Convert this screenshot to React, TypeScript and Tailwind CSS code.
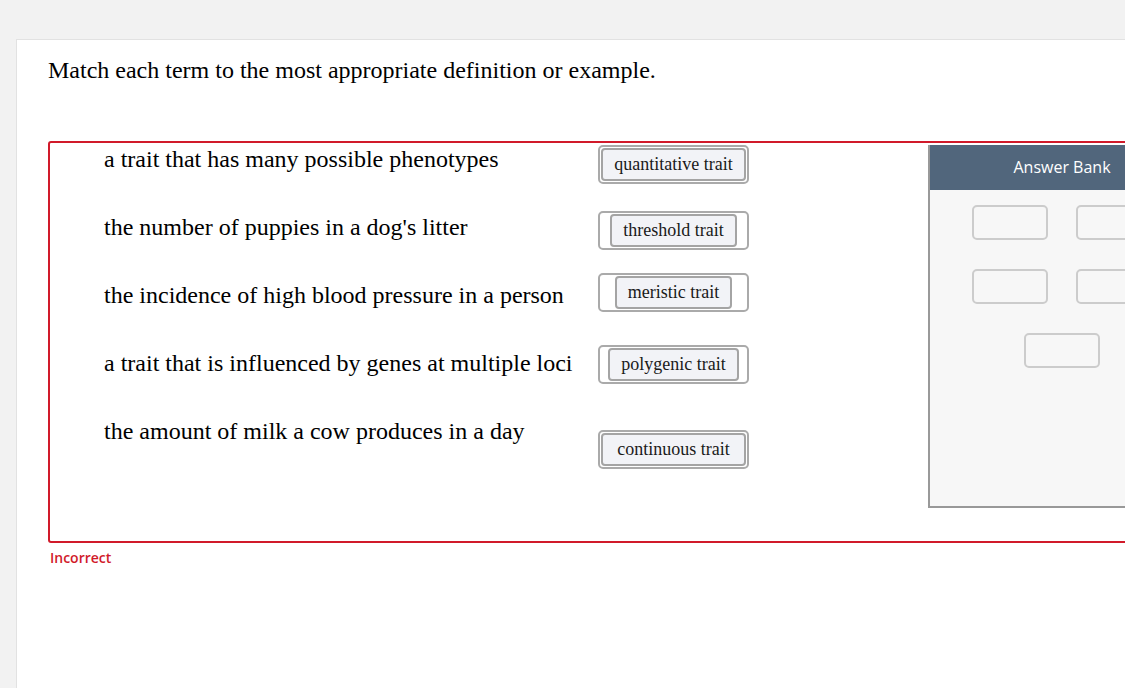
import React from "react";

const serif = { fontFamily: '"Liberation Serif", "Times New Roman", serif' };
const sans = { fontFamily: '"Open Sans", "Noto Sans", sans-serif' };

const terms = [
  "a trait that has many possible phenotypes",
  "the number of puppies in a dog's litter",
  "the incidence of high blood pressure in a person",
  "a trait that is influenced by genes at multiple loci",
  "the amount of milk a cow produces in a day",
];

const zones: { label: string; mt: string; full: boolean }[] = [
  { label: "quantitative trait", mt: "mt-0", full: true },
  { label: "threshold trait", mt: "mt-[27px]", full: false },
  { label: "meristic trait", mt: "mt-[23px]", full: false },
  { label: "polygenic trait", mt: "mt-[33px]", full: false },
  { label: "continuous trait", mt: "mt-[46px]", full: true },
];

function Chip({ label }: { label: string }) {
  return (
    <div
      className="h-[33px] px-[11px] pb-px flex items-center justify-center bg-[#f2f3f7] border-2 border-[#a4a4a4] rounded-[4px] text-[18px] leading-none text-[#1a1a1a] whitespace-nowrap"
      style={serif}
    >
      {label}
    </div>
  );
}

export default function App() {
  return (
    <div className="w-[1125px] h-[688px] overflow-hidden bg-[#f2f2f2] pt-[39px] pl-[16px]">
      <div className="w-[1300px] h-[700px] bg-white border-l border-t border-[#e2e2e2] pl-[31px] pt-[16px]">
        <div className="text-[24px] leading-[28px] text-black" style={serif}>
          Match each term to the most appropriate definition or example.
        </div>

        <div className="mt-[57px] w-[1250px] h-[402px] border-2 border-[#d11a2a] rounded-[3px] flex">
          <div className="flex pl-[54px] pt-[2px]">
            <div className="w-[494px] flex flex-col">
              {terms.map((t) => (
                <div
                  key={t}
                  className="h-[68px] text-[24px] leading-[28px] text-black whitespace-nowrap"
                  style={serif}
                >
                  {t}
                </div>
              ))}
            </div>
            <div className="w-[151px] flex flex-col">
              {zones.map((z) => (
                <div
                  key={z.label}
                  className={`${z.mt} h-[39px] border-2 border-[#aaaaaa] rounded-[5px] bg-white p-px flex items-center justify-center`}
                >
                  {z.full ? (
                    <div className="w-full">
                      <Chip label={z.label} />
                    </div>
                  ) : (
                    <Chip label={z.label} />
                  )}
                </div>
              ))}
            </div>
          </div>

          <div className="ml-[179px] mt-[2px] w-[268px] h-[363px] border-l-2 border-r-2 border-b-2 border-[#999999] bg-[#f7f7f7] flex flex-col">
            <div
              className="h-[45px] pb-[2px] bg-[#51667c] text-white text-[16px] flex items-center justify-center"
              style={sans}
            >
              Answer Bank
            </div>
            <div className="pt-[15px] flex flex-wrap justify-center gap-x-[28px] gap-y-[29px] px-[40px]">
              {[0, 1, 2, 3, 4].map((i) => (
                <div
                  key={i}
                  className="w-[76px] h-[35px] border-2 border-[#cccccc] rounded-[5px] bg-[#f7f7f7]"
                />
              ))}
            </div>
          </div>
        </div>

        <div
          className="ml-[2px] mt-[5px] text-[14px] leading-[20px] font-semibold text-[#d11a2a]"
          style={sans}
        >
          Incorrect
        </div>
      </div>
    </div>
  );
}
